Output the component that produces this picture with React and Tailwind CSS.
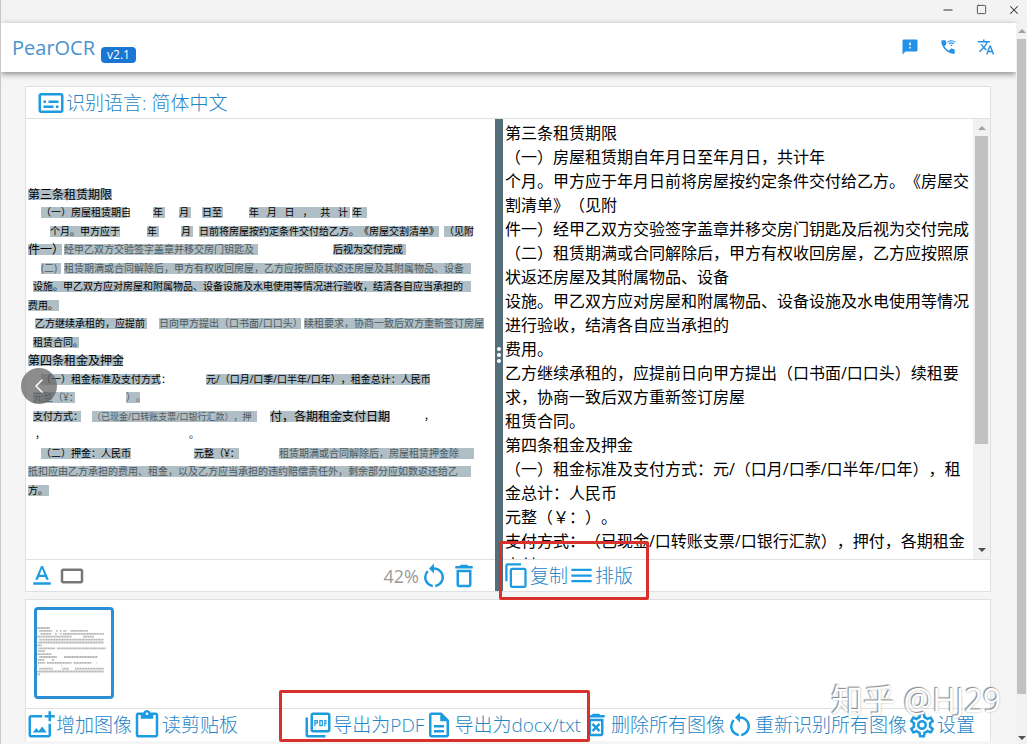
import clsx from 'clsx'
import {
  MdFeedback,
  MdWifiCalling3,
  MdTranslate,
  MdOutlineSubtitles,
  MdTextFormat,
  MdCrop32,
  MdRestartAlt,
  MdDeleteOutline,
  MdContentCopy,
  MdMenu,
  MdOutlineAddPhotoAlternate,
  MdContentPaste,
  MdOutlinePictureAsPdf,
  MdOutlineDescription,
  MdOutlineDeleteForever,
  MdOutlineSettings,
} from 'react-icons/md'
import { Minus, Square, X, ChevronLeft } from 'lucide-react'

// recognised boxes of the scan, row by row: x and width in page pixels
const scanRows = [
  [{ x: 2, w: 84, text: '第三条租赁期限', big: true }],
  [
    { x: 15, w: 86, text: '（一）房屋租赁期自' },
    { x: 127, w: 12, text: '年' },
    { x: 153, w: 12, text: '月' },
    { x: 176, w: 21, text: '日至' },
    { x: 223, w: 101, text: '年   月   日   ，   共   计' },
    { x: 326, w: 15, text: '年' },
  ],
  [
    { x: 24, w: 70, text: '个月。甲方应于' },
    { x: 121, w: 12, text: '年' },
    { x: 155, w: 12, text: '月' },
    { x: 173, w: 240, text: '日前将房屋按约定条件交付给乙方。《房屋交割清单》' },
    { x: 418, w: 28, text: '（见附' },
  ],
  [
    { x: 2, w: 34, text: '件一）', big: true },
    { x: 38, w: 194, text: '经甲乙双方交验签字盖章并移交房门钥匙及', faint: true },
    { x: 307, w: 73, text: '后视为交付完成' },
  ],
  [
    { x: 15, w: 20, text: '(二)', faint: true },
    { x: 38, w: 407, text: '租赁期满或合同解除后，甲方有权收回房屋，乙方应按照原状返还房屋及其附属物品、设备', faint: true },
  ],
  [{ x: 7, w: 438, text: '设施。甲乙双方应对房屋和附属物品、设备设施及水电使用等情况进行验收，结清各自应当承担的' }],
  [{ x: 2, w: 31, text: '费用。' }],
  [
    { x: 9, w: 112, text: '乙方继续承租的，应提前' },
    { x: 133, w: 142, text: '日向甲方提出（口书面/口口头）', faint: true },
    { x: 278, w: 180, text: '续租要求，协商一致后双方重新签订房屋', faint: true },
  ],
  [{ x: 7, w: 46, text: '租赁合同。' }],
  [{ x: 2, w: 95, text: '第四条租金及押金', big: true }],
  [
    { x: 15, w: 119, text: '（一）租金标准及支付方式：' },
    { x: 180, w: 224, text: '元/（口月/口季/口半年/口年），租金总计：人民币' },
  ],
  [
    { x: 7, w: 42, text: '元整（¥：', faint: true },
    { x: 100, w: 14, text: '）。', faint: true },
  ],
  [
    { x: 7, w: 48, text: '支付方式：' },
    { x: 66, w: 165, text: '（已现金/口转账支票/口银行汇款），押', faint: true, small: true },
    { x: 244, w: 120, text: '付，各期租金支付日期', big: true },
    { x: 398, w: 4, text: '，', bare: true },
  ],
  [
    { x: 9, w: 4, text: '，', bare: true },
    { x: 163, w: 4, text: '。', bare: true },
  ],
  [
    { x: 15, w: 90, text: '（二）押金：人民币' },
    { x: 168, w: 45, text: '元整（¥：' },
    { x: 253, w: 195, text: '租赁期满或合同解除后，房屋租赁押金除', faint: true },
  ],
  [{ x: 2, w: 443, text: '抵扣应由乙方承担的费用、租金，以及乙方应当承担的违约赔偿责任外，剩余部分应如数返还给乙', faint: true }],
  [{ x: 2, w: 21, text: '方。' }],
]

const resultText = `第三条租赁期限
（一）房屋租赁期自年月日至年月日，共计年
个月。甲方应于年月日前将房屋按约定条件交付给乙方。《房屋交割清单》（见附
件一）经甲乙双方交验签字盖章并移交房门钥匙及后视为交付完成
（二）租赁期满或合同解除后，甲方有权收回房屋，乙方应按照原状返还房屋及其附属物品、设备
设施。甲乙双方应对房屋和附属物品、设备设施及水电使用等情况进行验收，结清各自应当承担的
费用。
乙方继续承租的，应提前日向甲方提出（口书面/口口头）续租要求，协商一致后双方重新签订房屋
租赁合同。
第四条租金及押金
（一）租金标准及支付方式：元/（口月/口季/口半年/口年），租金总计：人民币
元整（￥：）。
支付方式：（已现金/口转账支票/口银行汇款），押付，各期租金
支付`

const windowButtons = [
  { icon: Minus, label: '最小化' },
  { icon: Square, label: '最大化' },
  { icon: X, label: '关闭' },
]

function ToolButton({ icon: Icon, label, compact }) {
  return (
    <button type="button" className="flex items-center whitespace-nowrap">
      <Icon className={clsx('shrink-0 text-[#1d9be0]', compact ? 'size-[27px]' : 'size-[30px]')} />
      {label}
    </button>
  )
}

function ScanRow({ boxes }) {
  return (
    <div className="flex h-[18px] items-center even:h-[19px]">
      {boxes.map((box, i) => {
        const prev = boxes[i - 1]
        const start = prev ? prev.x + prev.w : 0
        return (
          <span
            key={box.x}
            className={clsx(
              'h-[11px] shrink-0 leading-[11px] whitespace-pre',
              box.big && 'text-[12px]',
              box.small && 'text-[9px]',
              !box.big && !box.small && 'text-[10px]',
              box.faint ? 'text-[#4d5a60]' : 'text-black',
              !box.bare && 'bg-[#b0bec5]',
            )}
            style={{ marginLeft: box.x - start, width: box.w }}
          >
            {box.text}
          </span>
        )
      })}
    </div>
  )
}

function ScrollArrow({ down, dark }) {
  return (
    <svg viewBox="0 0 8 4" className={clsx('w-2 shrink-0', down && 'rotate-180', dark ? 'text-[#505050]' : 'text-[#a0a0a0]')}>
      <path d="M0 4 4 0l4 4z" fill="currentColor" />
    </svg>
  )
}

function Thumbnail() {
  return (
    <button type="button" aria-label="图像 1" className="h-[92px] w-20 rounded border-[3px] border-[#2b8fd6] bg-white">
      <svg viewBox="0 0 74 86" className="size-full" stroke="#b4b4b4" strokeWidth="1.8">
        {scanRows.map((boxes, row) =>
          boxes.map((box) => (
            <line
              key={`${row}-${box.x}`}
              x1={box.x * 0.15}
              x2={(box.x + box.w) * 0.15}
              y1={18 + row * 2.9}
              y2={18 + row * 2.9}
              strokeDasharray="1.3 0.3"
            />
          )),
        )}
      </svg>
    </button>
  )
}

export default function App() {
  return (
    <div className="relative flex h-screen min-h-[744px] flex-col overflow-hidden border-l border-[#c8c8c8] bg-[#f5f5f5] font-['Open_Sans','Noto_Sans_CJK_SC',sans-serif] [text-spacing-trim:space-all]">
      {/* Window bar */}
      <div className="flex h-[23px] shrink-0 items-center justify-end gap-[19px] bg-[#f3f3f3] pr-1.5 pb-1">
        {windowButtons.map(({ icon: Icon, label }) => (
          <button key={label} type="button" aria-label={label} className="flex w-3.5 justify-center text-[#333]">
            <Icon className={label === '最大化' ? 'size-[11px]' : 'size-3.5'} strokeWidth={1.8} />
          </button>
        ))}
      </div>

      <div className="flex min-h-0 flex-1">
        <div className="min-w-0 flex-1">
          <header className="flex h-[49px] items-center justify-between bg-white pr-[21px] pl-[11px] shadow-[0_2px_6px_rgba(0,0,0,0.45)]">
            <div className="flex items-center gap-1.5">
              <h1 className="text-xl text-[#4a92cf]">PearOCR</h1>
              <span className="mt-3.5 rounded bg-[#1976d2] px-1.5 text-xs leading-4 text-white">v2.1</span>
            </div>
            <nav className="flex items-center gap-5 pb-0.5 text-[#2490e6]">
              <button type="button" aria-label="反馈"><MdFeedback className="size-[18px]" /></button>
              <button type="button" aria-label="联系"><MdWifiCalling3 className="size-[18px]" /></button>
              <button type="button" aria-label="语言"><MdTranslate className="size-[18px]" /></button>
            </nav>
          </header>

          <main className="pt-3.5 pr-[25px] pl-6 text-[19px] leading-7 font-light text-[#2585c6]">
            <section className="border border-[#e0e0e0] bg-white">
              <div className="flex h-8 items-center border-b border-[#e0e0e0] pl-2.5">
                <ToolButton icon={MdOutlineSubtitles} label="识别语言: 简体中文" />
              </div>

              <div className="flex">
                {/* Scan with recognised boxes */}
                <div className="relative flex min-w-0 flex-1 flex-col">
                  <div className="h-[440px] overflow-hidden pt-[66px] font-normal">
                    {scanRows.map((boxes, i) => (
                      <ScanRow key={i} boxes={boxes} />
                    ))}
                  </div>
                  <button
                    type="button"
                    aria-label="上一张"
                    className="absolute top-[249px] -left-[5px] flex size-9 items-center justify-center rounded-full bg-[#666]/75 text-white"
                  >
                    <ChevronLeft className="size-6" strokeWidth={1.5} />
                  </button>
                  <div className="flex h-8 items-center border-t border-[#e0e0e0] pr-4 pl-px text-[#1d9be0]">
                    <button type="button" aria-label="文字"><MdTextFormat className="size-[30px]" /></button>
                    <button type="button" aria-label="方框"><MdCrop32 className="size-[30px] text-[#777]" /></button>
                    <span className="ml-auto text-lg font-normal text-[#999]">42%</span>
                    <button type="button" aria-label="旋转"><MdRestartAlt className="size-[30px]" /></button>
                    <button type="button" aria-label="删除"><MdDeleteOutline className="size-[30px]" /></button>
                  </div>
                </div>

                <div className="flex w-2 shrink-0 flex-col items-center justify-center gap-0.5 bg-[#546e7a]">
                  <i className="size-1 rounded-full bg-white" />
                  <i className="size-1 rounded-full bg-white" />
                  <i className="size-1 rounded-full bg-white" />
                </div>

                {/* Recognised text */}
                <div className="w-[487px] shrink-0">
                  <div className="flex h-[440px]">
                    <div className="flex-1 overflow-hidden pt-0.5 pl-0.5 text-base leading-6 font-normal whitespace-pre-line text-black">
                      {resultText}
                    </div>
                    <div className="flex w-[17px] flex-col items-center justify-between bg-[#f1f1f1] py-[7px]">
                      <ScrollArrow />
                      <div className="mt-1.5 mb-auto h-[308px] w-[13px] bg-[#c1c1c1]" />
                      <ScrollArrow down dark />
                    </div>
                  </div>
                  <div className="relative flex h-8 items-center border-t border-[#e0e0e0]">
                    <ToolButton icon={MdContentCopy} label="复制" compact />
                    <ToolButton icon={MdMenu} label="排版" compact />
                    <div className="absolute -top-[19px] -left-1 h-[59px] w-[150px] rounded-xs border-[3px] border-[#d9302c]" />
                  </div>
                </div>
              </div>
            </section>

            <section className="mt-[7px] border border-b-0 border-[#e0e0e0] bg-white">
              <div className="h-[108px] px-2 pt-[7px]">
                <Thumbnail />
              </div>
              <div className="flex h-[33px] items-center justify-between border-t border-[#e0e0e0] pr-[15px]">
                <div className="flex items-center">
                  <ToolButton icon={MdOutlineAddPhotoAlternate} label="增加图像" />
                  <ToolButton icon={MdContentPaste} label="读剪贴板" />
                </div>
                <div className="relative flex items-center">
                  <ToolButton icon={MdOutlinePictureAsPdf} label="导出为PDF" />
                  <ToolButton icon={MdOutlineDescription} label="导出为docx/txt" />
                  <ToolButton icon={MdOutlineDeleteForever} label="删除所有图像" />
                  <ToolButton icon={MdRestartAlt} label="重新识别所有图像" />
                  <ToolButton icon={MdOutlineSettings} label="设置" />
                  <div className="absolute -top-5 -left-6 h-[52px] w-[311px] rounded-xs border-[3px] border-[#d9302c]" />
                </div>
              </div>
            </section>
          </main>
        </div>

        {/* Page scrollbar */}
        <div className="flex w-[11px] shrink-0 flex-col items-center overflow-hidden bg-[#f1f1f1] pt-1.5 pb-1">
          <ScrollArrow />
          <div className="mt-1.5 mb-auto h-[655px] w-[9px] bg-[#c1c1c1]" />
          <ScrollArrow down dark />
        </div>
      </div>

      <div className="pointer-events-none absolute right-[26px] bottom-6 text-[32px] leading-10 text-white [text-shadow:-1px_-1px_1px_#888,0_0_2px_#aaa]">
        知乎 @HJ29
      </div>
    </div>
  )
}
